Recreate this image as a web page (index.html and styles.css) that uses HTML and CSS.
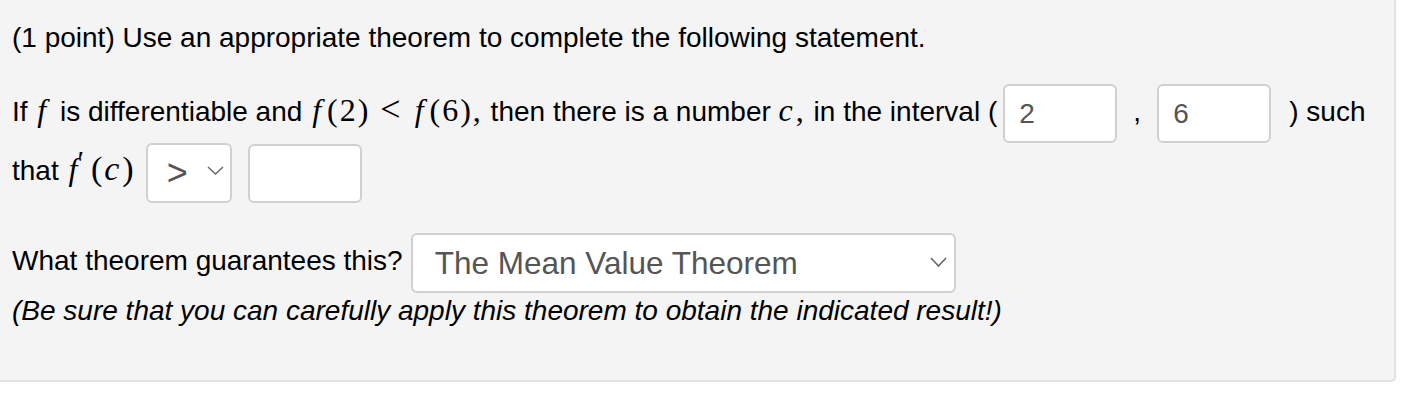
FILE: index.html
```html
<!DOCTYPE html>
<html>
<head>
<meta charset="utf-8">
<link rel="stylesheet" href="styles.css">
</head>
<body>
<div class="panel">
  <p class="intro">(1 point) Use an appropriate theorem to complete the following statement.</p>
  <p class="statement">If <span class="m"><i class="fn">f</i></span> is differentiable and <span class="m"><i class="fn">f</i>(2)<span class="lt">&lt;</span><i class="fn">f</i>(6),</span> then there is a number <span class="m"><i class="cv">c</i>,</span> in the interval (<span class="field first">2</span><span class="comma">,</span><span class="field second">6</span><span class="close">) such</span> that <span class="m"><i class="fn fp">f</i><span class="prime">′</span><span class="pc">(<i class="cv">c</i>)</span></span><span class="select small"><span class="sel-text">&gt;</span><svg class="chev" width="17" height="9" viewBox="0 0 17 9"><path d="M1 1 L8.5 8 L16 1" fill="none" stroke="#666" stroke-width="1.4"/></svg></span><span class="field blank"></span></p>
  <p class="question">What theorem guarantees this?<span class="select big"><span class="sel-text">The Mean Value Theorem</span><svg class="chev" width="17" height="10" viewBox="0 0 17 10"><path d="M1 1 L8.5 9 L16 1" fill="none" stroke="#666" stroke-width="1.6"/></svg></span></p>
  <p class="note">(Be sure that you can carefully apply this theorem to obtain the indicated result!)</p>
</div>
</body>
</html>
```
FILE: styles.css
```css
html, body {
  margin: 0;
  padding: 0;
  background: #ffffff;
}
body {
  font-family: "Liberation Sans", Arial, sans-serif;
  font-size: 28px;
  color: #000;
}
.panel {
  box-sizing: border-box;
  width: 1396px;
  height: 382px;
  background: #f4f4f4;
  border-right: 2px solid #e2e2e2;
  border-bottom: 2px solid #e2e2e2;
  border-bottom-right-radius: 5px;
  padding: 22px 0 0 12px;
}
p {
  margin: 0;
  line-height: normal;
}
.intro {
  margin-bottom: 30px;
}
.m {
  font-family: "Liberation Serif", "Times New Roman", serif;
  font-size: 32px;
  letter-spacing: 2px;
}
.m i {
  font-style: italic;
}
.fn {
  padding: 0 4px 0 2px;
}
.fp {
  padding-right: 1px;
}
.cv {
  padding-right: 1px;
}
.prime {
  font-size: 30px;
  vertical-align: 9px;
  margin: 0 5px 0 -3px;
}
.pc {
  font-size: 34px;
}
.lt {
  font-size: 36px;
  margin: 0 10px;
}
.field {
  display: inline-block;
  box-sizing: border-box;
  width: 114px;
  height: 59px;
  background: #fff;
  border: 2px solid #d0d0d0;
  border-radius: 6px;
  padding: 0 14px;
  color: #555;
  font-size: 28px;
  line-height: 55px;
  vertical-align: middle;
}
.first {
  margin-left: 6px;
}
.comma {
  display: inline-block;
  width: 40px;
  text-align: center;
}
.close {
  margin-left: 18px;
}
.select {
  display: inline-flex;
  align-items: center;
  justify-content: space-between;
  box-sizing: border-box;
  height: 60px;
  background: #fff;
  border: 2px solid #d0d0d0;
  border-radius: 6px;
  color: #555;
  vertical-align: middle;
  line-height: 56px;
}
.select.small {
  width: 86px;
  margin-left: 10px;
  margin-right: 16px;
  padding: 0 6px 0 19px;
  font-size: 36px;
}
.select.small .chev {
  margin-top: -6px;
}
.blank {
  width: 114px;
}
.question {
  margin-top: 30px;
}
.select.big {
  width: 545px;
  margin-left: 8px;
  padding: 0 7px 0 22px;
  font-size: 31.5px;
}
.select.big .chev {
  margin-top: -2px;
}
.note {
  margin-top: 2px;
  font-style: italic;
}
```
